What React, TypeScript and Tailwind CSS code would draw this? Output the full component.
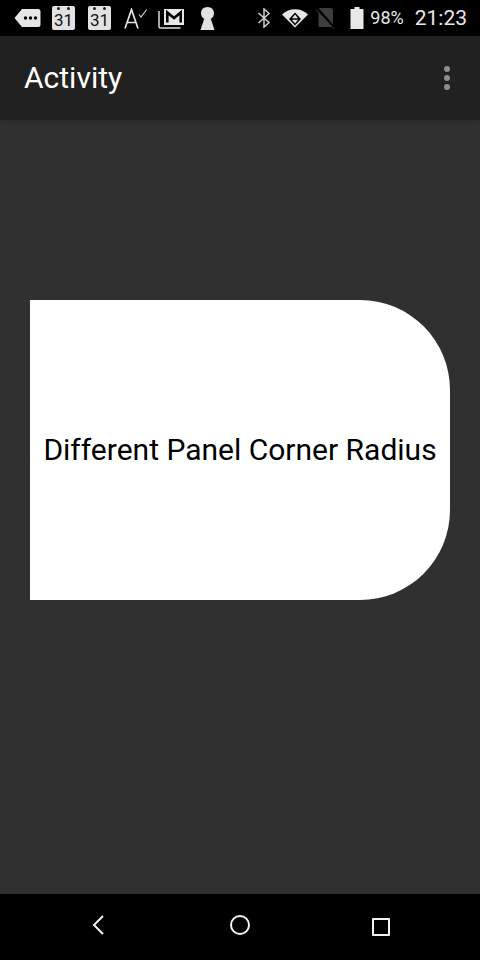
const roboto = "font-['Roboto',sans-serif]";

function TagIcon() {
  return (
    <svg width="27" height="20" viewBox="0 0 27 20" className="shrink-0">
      <path d="M8 1H24a2.500 2.500 0 0 1 2.500 2.500V16.500a2.500 2.500 0 0 1-2.500 2.500H8L.5 10Z" fill="#e6e6e6" />
      <circle cx="11.500" cy="10" r="1.700" fill="#000" />
      <circle cx="16.500" cy="10" r="1.700" fill="#000" />
      <circle cx="21.500" cy="10" r="1.700" fill="#000" />
    </svg>
  );
}

function CalendarIcon() {
  return (
    <div className="relative flex h-6 w-[23px] shrink-0 items-end justify-center rounded-[2px] bg-[#e2e2e2]">
      <span className="absolute left-[5px] top-[1px] h-[3px] w-[3px] rounded-full bg-[#222222]" />
      <span className="absolute right-[5px] top-[1px] h-[3px] w-[3px] rounded-full bg-[#222222]" />
      <span className={`${roboto} text-[17px] font-normal leading-[20px] text-[#111111]`}>31</span>
    </div>
  );
}

function SpellIcon() {
  return (
    <svg width="24" height="21" viewBox="0 0 24 21" className="shrink-0">
      <path d="M1 20.500 7.500 1.500 14 20.500M3 14.500h9" fill="none" stroke="#e6e6e6" strokeWidth="1.700" />
      <path d="M15 6.500 17 9l5.700-7.500" fill="none" stroke="#d8d8d8" strokeWidth="1.100" />
    </svg>
  );
}

function MailIcon() {
  return (
    <svg width="27" height="22" viewBox="0 0 27 22" className="shrink-0">
      <path d="M1 4v15.500a1.500 1.500 0 0 0 1.500 1.500H22.500" fill="none" stroke="#dddddd" strokeWidth="1.500" />
      <path d="M6 2h20v16H6Z" fill="#e6e6e6" />
      <path d="M9.300 15.500V5.500L16 11l6.700-5.500v10" fill="none" stroke="#000" strokeWidth="2.600" />
    </svg>
  );
}

function KeyholeIcon() {
  return (
    <svg width="15" height="23" viewBox="0 0 15 23" className="shrink-0">
      <path d="M7.500 0C11.500 0 14 2.800 14 6.200c0 2.600-1.400 4.600-3.200 5.600L14.500 23H.5L4.200 11.800C2.400 10.800 1 8.800 1 6.200 1 2.800 3.500 0 7.500 0Z" fill="#e2e2e2" />
    </svg>
  );
}

function BluetoothIcon() {
  return (
    <svg width="14" height="20" viewBox="0 0 14 20" className="shrink-0">
      <path d="M1.500 5 12 14.500 7 19V1l5 4.500L1.500 15" fill="none" stroke="#cfcfcf" strokeWidth="1.500" />
    </svg>
  );
}

function WifiIcon() {
  return (
    <svg width="26" height="19" viewBox="0 0 26 19" className="shrink-0">
      <path d="M0 5.500C7-1.500 19-1.500 26 5.500L13 18.500Z" fill="#e6e6e6" />
      <path d="M13 3.500 7 10l6 6.500L19 10Z" fill="#000" />
      <path d="M13 5.500 10 9.300h6ZM10 10.700h6l-3 3.800Z" fill="#e6e6e6" />
    </svg>
  );
}

function SimIcon() {
  return (
    <svg width="20" height="22" viewBox="0 0 20 22" className="shrink-0">
      <path d="M3.500 1H15a2 2 0 0 1 2 2v16a1 1 0 0 1-1 1H3.500a1 1 0 0 1-1-1V2a1 1 0 0 1 1-1Z" fill="#3d3d3d" />
      <path d="M0 0 19 21.500" stroke="#000" strokeWidth="2.500" />
      <path d="M.5 1 19.500 21.500" stroke="#3d3d3d" strokeWidth="1" transform="translate(-1 1)" />
    </svg>
  );
}

function BatteryIcon() {
  return (
    <svg width="14" height="22" viewBox="0 0 14 22" className="shrink-0">
      <path d="M4.500 0h5v2h3.500a.5.500 0 0 1 .5.500V22H.5V2.500A.5.500 0 0 1 1 2h3.500Z" fill="#e8e8e8" />
    </svg>
  );
}

function StatusBar() {
  return (
    <div className={`${roboto} flex h-9 shrink-0 items-center justify-between bg-black pl-[14px] pr-[13px] text-[#e8e8e8]`}>
      <div className="flex items-center">
        <TagIcon />
        <div className="ml-[11px] flex items-center gap-[13px]">
          <CalendarIcon />
          <CalendarIcon />
        </div>
        <div className="ml-[13px]"><SpellIcon /></div>
        <div className="ml-[10px]"><MailIcon /></div>
        <div className="ml-[15px]"><KeyholeIcon /></div>
      </div>
      <div className="flex items-center">
        <BluetoothIcon />
        <div className="ml-[11px]"><WifiIcon /></div>
        <div className="ml-[8px]"><SimIcon /></div>
        <div className="ml-[14px]"><BatteryIcon /></div>
        <span className="ml-[6px] text-[18px] leading-none">98%</span>
        <span className="ml-[11px] text-[21px] leading-none">21:23</span>
      </div>
    </div>
  );
}

function Toolbar() {
  return (
    <div className="z-10 flex h-[84px] shrink-0 items-center justify-between bg-[#212121] pl-6 pr-[30px] shadow-[0_2px_4px_rgba(0,0,0,0.12)]">
      <h1 className={`${roboto} text-[30px] font-normal leading-none text-white`}>Activity</h1>
      <div className="flex flex-col gap-[3px]">
        <span className="h-[6px] w-[6px] rounded-full bg-[#8e8e8e]" />
        <span className="h-[6px] w-[6px] rounded-full bg-[#8e8e8e]" />
        <span className="h-[6px] w-[6px] rounded-full bg-[#8e8e8e]" />
      </div>
    </div>
  );
}

function NavBar() {
  return (
    <div className="flex h-[66px] shrink-0 items-center gap-[122px] bg-black pb-1 pl-[91px]">
      <svg width="14" height="20" viewBox="0 0 14 20">
        <path d="M12 1 3 10l9 9" fill="none" stroke="#f2f2f2" strokeWidth="2" />
      </svg>
      <span className="ml-[3px] h-5 w-5 rounded-full border-2 border-[#f2f2f2]" />
      <span className="mt-[3px] h-[18px] w-[18px] rounded-[1px] border-2 border-[#f2f2f2]" />
    </div>
  );
}

export default function App() {
  return (
    <div className="flex h-[960px] w-[480px] flex-col overflow-hidden bg-[#303030]">
      <StatusBar />
      <Toolbar />
      <main className="flex flex-1 items-start px-[30px] pt-[180px]">
        <div className="flex h-[300px] w-[420px] items-center justify-center rounded-r-[90px] bg-white">
          <span className={`${roboto} text-[30px] leading-none text-black`}>Different Panel Corner Radius</span>
        </div>
      </main>
      <NavBar />
    </div>
  );
}
